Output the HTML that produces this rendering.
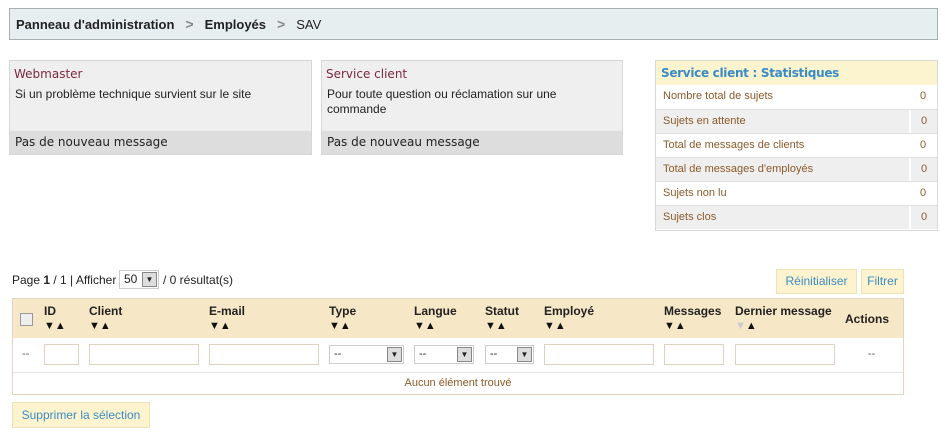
<!DOCTYPE html>
<html><head><meta charset="utf-8"><style>
*{margin:0;padding:0;box-sizing:border-box}
body{width:941px;height:440px;background:#fff;font-family:"Liberation Sans",Arial,sans-serif;position:relative;overflow:hidden;color:#222}
.a{position:absolute}
.bc{left:9px;top:8px;width:929px;height:32px;background:#e7eef0;border:1px solid #a9b0b3;font-size:13px;font-weight:bold;line-height:30px;padding-left:6px;color:#222}
.bc .s{color:#888;margin:0 11px;font-weight:bold;font-size:14px}
.card{top:60px;height:95px;width:303px;background:#efefef;border:1px solid #d6d6d6}
.card h3{font-family:"DejaVu Sans",sans-serif;font-size:12px;font-weight:normal;color:#7b2940;position:absolute;left:4px;top:6px}
.card p{position:absolute;left:5px;top:26px;font-size:12px;line-height:15px;color:#222;width:280px}
.card .f{position:absolute;left:0;right:0;bottom:0;height:23px;background:#dddddd;font-family:"DejaVu Sans",sans-serif;font-size:12px;line-height:23px;padding-left:5px;color:#222}
.st{left:655px;top:60px;width:283px;height:171px;border:1px solid #d8d8d8;background:#fff}
.st .h{height:24px;background:#fcf3cf;color:#3b8cc4;font-family:"DejaVu Sans",sans-serif;font-size:12px;font-weight:bold;line-height:24px;padding-left:5px;letter-spacing:-0.3px}
.st .r{height:24px;border-top:1px solid #e0e0e0;font-size:11px;color:#8a5a2a;line-height:23px;padding-left:7px;position:relative}
.st .r.g{background:#efefef}
.st .r b{font-weight:normal;position:absolute;right:0;top:0;width:28px;text-align:center;height:23px}
.st .r.g b{border-left:2px solid #fff}
.btn{background:#fdf3cf;border:1px solid #eee2b8;color:#3b8cc4;font-size:12px;text-align:center;line-height:22px}
.tbl{left:12px;top:298px;width:892px;height:97px;border:1px solid #e0d6bf}
.th{left:0;top:0;width:890px;height:39px;background:#f6e7c7}
.hd{font-size:12px;font-weight:bold;color:#222}
.ar{font-size:11px;letter-spacing:0px;color:#111;line-height:11px}
.in{height:21px;border:1px solid #ddd3bd;background:#fff}
.sel{height:19px;border:1px solid #ccc;background:#fff;font-size:11px;line-height:17px;padding-left:4px}
.sel i{position:absolute;right:1px;top:1px;width:15px;height:15px;background:#ddd;border:1px solid #888;font-style:normal;font-size:8px;text-align:center;line-height:13px}
</style></head><body>
<div class="a bc">Panneau d'administration<span class="s">&gt;</span>Employés<span class="s">&gt;</span><span style="font-weight:normal">SAV</span></div>

<div class="a card" style="left:9px"><h3>Webmaster</h3><p>Si un problème technique survient sur le site</p><div class="f">Pas de nouveau message</div></div>
<div class="a card" style="left:321px;width:302px"><h3>Service client</h3><p>Pour toute question ou réclamation sur une commande</p><div class="f">Pas de nouveau message</div></div>

<div class="a st"><div class="h">Service client : Statistiques</div>
<div class="r" style="border-top:none">Nombre total de sujets<b>0</b></div>
<div class="r g">Sujets en attente<b>0</b></div>
<div class="r">Total de messages de clients<b>0</b></div>
<div class="r g">Total de messages d'employés<b>0</b></div>
<div class="r">Sujets non lu<b>0</b></div>
<div class="r g">Sujets clos<b>0</b></div>
</div>

<div class="a" style="left:12px;top:273px;font-size:12px;line-height:14px">Page <b>1</b> / 1 | Afficher</div>
<div class="a sel" style="left:119px;top:270px;width:40px;font-size:12px">50<i>▼</i></div>
<div class="a" style="left:163px;top:273px;font-size:12px;line-height:14px">/ 0 résultat(s)</div>
<div class="a btn" style="left:776px;top:269px;width:81px;height:25px">Réinitialiser</div>
<div class="a btn" style="left:861px;top:269px;width:43px;height:25px">Filtrer</div>

<div class="a tbl">
<div class="a th"></div>
<div class="a" style="left:7px;top:14px;width:13px;height:13px;border:1px solid #999;background:#eee"></div>
<div class="a hd" style="left:31px;top:5px">ID</div><div class="a ar" style="left:31px;top:22px">▼▲</div>
<div class="a hd" style="left:76px;top:5px">Client</div><div class="a ar" style="left:76px;top:22px">▼▲</div>
<div class="a hd" style="left:196px;top:5px">E-mail</div><div class="a ar" style="left:196px;top:22px">▼▲</div>
<div class="a hd" style="left:316px;top:5px">Type</div><div class="a ar" style="left:316px;top:22px">▼▲</div>
<div class="a hd" style="left:401px;top:5px">Langue</div><div class="a ar" style="left:401px;top:22px">▼▲</div>
<div class="a hd" style="left:472px;top:5px">Statut</div><div class="a ar" style="left:472px;top:22px">▼▲</div>
<div class="a hd" style="left:531px;top:5px">Employé</div><div class="a ar" style="left:531px;top:22px">▼▲</div>
<div class="a hd" style="left:651px;top:5px">Messages</div><div class="a ar" style="left:651px;top:22px">▼▲</div>
<div class="a hd" style="left:722px;top:5px">Dernier message</div><div class="a ar" style="left:722px;top:22px"><span style="color:#ccc">▼</span>▲</div>
<div class="a hd" style="left:832px;top:13px">Actions</div>
<div class="a" style="left:9px;top:49px;font-size:11px;color:#555">--</div>
<div class="a in" style="left:31px;top:45px;width:35px"></div>
<div class="a in" style="left:76px;top:45px;width:110px"></div>
<div class="a in" style="left:196px;top:45px;width:110px"></div>
<div class="a sel" style="left:316px;top:46px;width:75px">--<i>▼</i></div>
<div class="a sel" style="left:401px;top:46px;width:60px">--<i>▼</i></div>
<div class="a sel" style="left:472px;top:46px;width:49px">--<i>▼</i></div>
<div class="a in" style="left:531px;top:45px;width:110px"></div>
<div class="a in" style="left:651px;top:45px;width:60px"></div>
<div class="a in" style="left:722px;top:45px;width:100px"></div>
<div class="a" style="left:855px;top:49px;font-size:11px;color:#555">--</div>
<div class="a" style="left:0;top:73px;width:890px;border-top:1px solid #e5e5e5"></div>
<div class="a" style="left:0;top:78px;width:890px;text-align:center;font-size:11px;color:#8a5a2a">Aucun élément trouvé</div>
</div>

<div class="a btn" style="left:12px;top:402px;width:138px;height:26px;line-height:24px">Supprimer la sélection</div>
</body></html>
